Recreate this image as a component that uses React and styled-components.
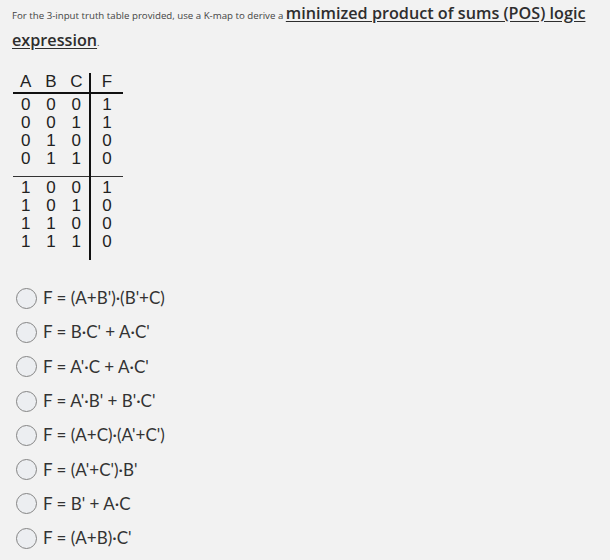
import React from 'react';
import styled, { createGlobalStyle } from 'styled-components';

const GlobalStyle = createGlobalStyle`
    body {
        margin: 0;
        background: #f2f2f2;
    }
`

const Page = styled.div`
    width: 610px;
    height: 560px;
    padding: 0 12px;
    box-sizing: border-box;
    overflow: hidden;
`
const Prompt = styled.p`
    margin: 0;
    padding-top: 1px;
    font-family: "Open Sans", sans-serif;
    font-size: 9.7px;
    line-height: 24px;
    color: #444;
`
const Emph = styled.span`
    font-size: 16.2px;
    line-height: 24px;
    font-weight: 600;
    color: #2e2e2e;
    text-decoration: underline;
    text-underline-offset: 2px;
`
const Table = styled.div`
    display: flex;
    margin: 18px 0 0 1px;
    font-family: "Liberation Sans", Arial, sans-serif;
    font-size: 17px;
    color: #222;
`
const Column = styled.div`
    width: ${p => p.$width}px;
    border-right: ${p => p.$divide ? '2px solid #111' : 'none'};
`
const Head = styled.div`
    height: 19px;
    line-height: 19px;
    border-bottom: 2px solid #111;
`
const Group = styled.div`
    padding: 2px 0 ${p => p.$last ? 9 : 8}px;
    border-bottom: ${p => p.$last ? 'none' : '1px solid #333'};
`
const Row = styled.div`
    display: grid;
    grid-template-columns: repeat(${p => p.$cols}, 1fr);
    height: 18px;
    line-height: 18px;
    text-align: center;
`
const Options = styled.div`
    margin-top: 21px;
    padding-left: 4px;
    display: flex;
    flex-direction: column;
`
const Option = styled.label`
    display: flex;
    align-items: center;
    gap: 6px;
    height: 34.3px;
    flex-shrink: 0;
    font-family: Lato, sans-serif;
    font-size: 17px;
    line-height: 20px;
    color: #333;
`
const Radio = styled.span`
    width: 19px;
    height: 19px;
    border-radius: 50%;
    border: 1px solid #858585;
    background: #eceef1;
    flex-shrink: 0;
`

const rows = [
    ['000', '1'], ['001', '1'], ['010', '0'], ['011', '0'],
    ['100', '1'], ['101', '0'], ['110', '0'], ['111', '0'],
]

const choices = [
    "F = (A+B')·(B'+C)",
    "F = B·C' + A·C'",
    "F = A'·C + A·C'",
    "F = A'·B' + B'·C'",
    "F = (A+C)·(A'+C')",
    "F = (A'+C')·B'",
    "F = B' + A·C",
    "F = (A+B)·C'",
]

const App = () => {
    const groups = [rows.slice(0, 4), rows.slice(4)]

    return (
        <Page>
            <GlobalStyle />
            <Prompt>
                For the 3-input truth table provided, use a K-map to derive a <Emph>minimized product of sums (POS) logic expression</Emph>.
            </Prompt>
            <Table>
                <Column $width={76} $divide>
                    <Head><Row $cols={3}><span>A</span><span>B</span><span>C</span></Row></Head>
                    {groups.map((g, i) => (
                        <Group key={i} $last={i === 1}>
                            {g.map(r => (
                                <Row key={r[0]} $cols={3}>
                                    {r[0].split('').map((d, j) => <span key={j}>{d}</span>)}
                                </Row>
                            ))}
                        </Group>
                    ))}
                </Column>
                <Column $width={32}>
                    <Head><Row $cols={1}><span>F</span></Row></Head>
                    {groups.map((g, i) => (
                        <Group key={i} $last={i === 1}>
                            {g.map(r => <Row key={r[0]} $cols={1}><span>{r[1]}</span></Row>)}
                        </Group>
                    ))}
                </Column>
            </Table>
            <Options>
                {choices.map(c => (
                    <Option key={c}>
                        <Radio />
                        <span>{c}</span>
                    </Option>
                ))}
            </Options>
        </Page>
    )
}

export default App
